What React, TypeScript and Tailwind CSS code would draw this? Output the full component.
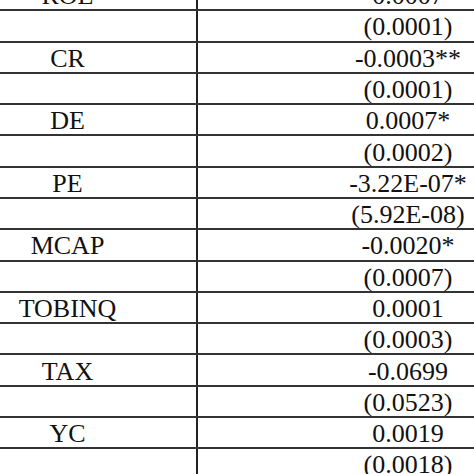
import React from 'react';

// regression results table, cropped view
const rows: { label: string; value: string }[] = [
  { label: 'ROE', value: '0.0007' },
  { label: '', value: '(0.0001)' },
  { label: 'CR', value: '-0.0003**' },
  { label: '', value: '(0.0001)' },
  { label: 'DE', value: '0.0007*' },
  { label: '', value: '(0.0002)' },
  { label: 'PE', value: '-3.22E-07*' },
  { label: '', value: '(5.92E-08)' },
  { label: 'MCAP', value: '-0.0020*' },
  { label: '', value: '(0.0007)' },
  { label: 'TOBINQ', value: '0.0001' },
  { label: '', value: '(0.0003)' },
  { label: 'TAX', value: '-0.0699' },
  { label: '', value: '(0.0523)' },
  { label: 'YC', value: '0.0019' },
  { label: '', value: '(0.0018)' },
];

export default function App() {
  return (
    <div
      className="w-[474px] h-[474px] overflow-hidden bg-white text-[#111] text-[26px]"
      style={{ fontFamily: '"Liberation Serif", "Times New Roman", serif' }}
    >
      <div className="-ml-[61px] -mt-[20px] w-[680px]">
        {rows.map((row, idx) => (
          <div key={idx} className="flex h-[31.29px] border-b-2 border-[#333]">
            <div className="w-[259px] border-r-2 border-[#222] flex items-center justify-center pt-[2px] whitespace-nowrap">
              {row.label}
            </div>
            <div className="w-[420px] flex items-center justify-center pt-[2px] whitespace-nowrap">
              {row.value}
            </div>
          </div>
        ))}
      </div>
    </div>
  );
}
